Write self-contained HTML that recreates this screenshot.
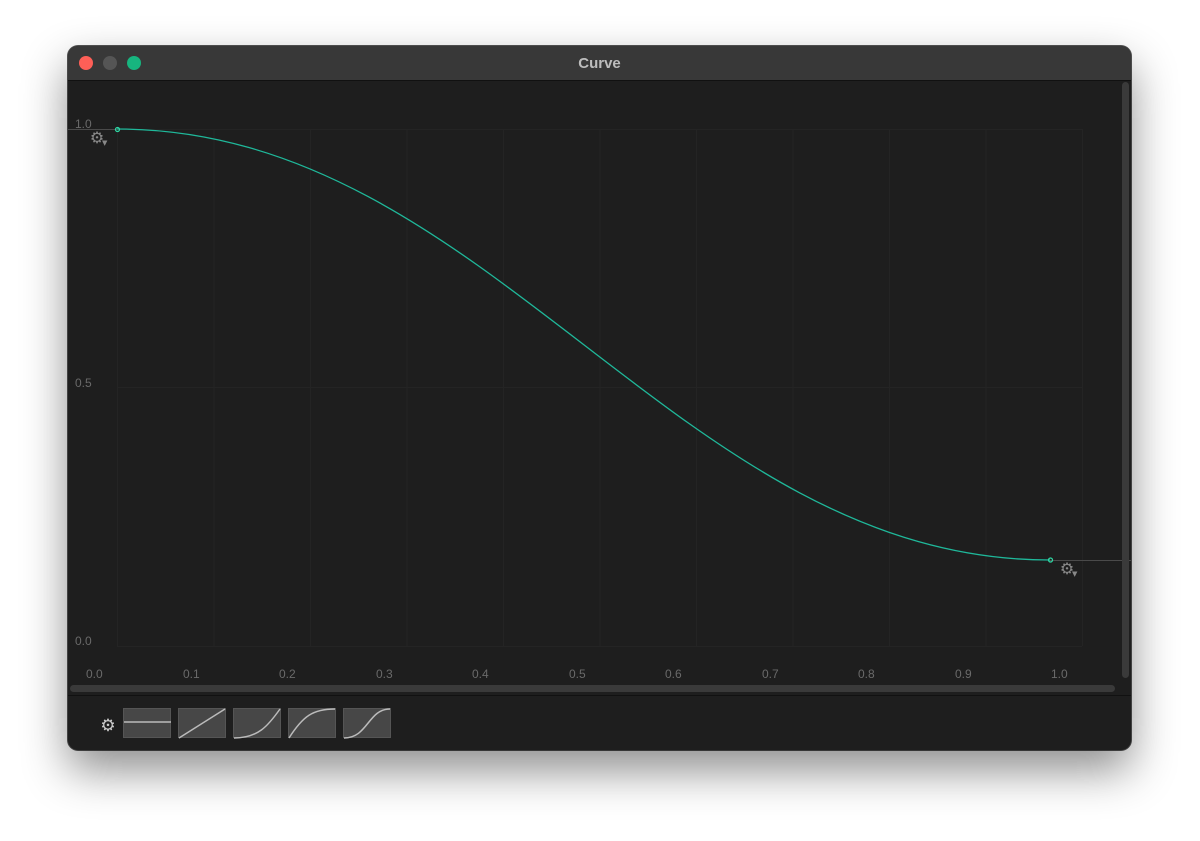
<!DOCTYPE html>
<html><head><style>
body{margin:0;width:1200px;height:841px;background:#fff;overflow:hidden;font-family:"Liberation Sans",sans-serif}
.win{position:absolute;left:68px;top:46px;width:1063px;height:704px;border-radius:10px;background:#1e1e1e;overflow:hidden;box-shadow:0 20px 45px rgba(0,0,0,.45),0 0 0 1px #555}
.tb{position:absolute;left:0;top:0;width:100%;height:34px;background:#383838;border-bottom:1px solid #111}
.tb .t{position:absolute;width:100%;text-align:center;top:9px;color:#bdbdbd;font-weight:bold;font-size:15px}
.d{position:absolute;top:10px;width:14px;height:14px;border-radius:50%}
.lab{position:absolute;color:#6a6a6a;font-size:12px}
.btn{position:absolute;top:662px;width:48px;height:30px;background:#474747;border:1px solid #555;box-sizing:border-box}
</style></head><body>
<div class="win">
<div class="tb"><div class="d" style="left:11px;background:#fe5f57"></div><div class="d" style="left:35px;background:#555"></div><div class="d" style="left:59px;background:#17b57f"></div><div class="t">Curve</div></div>
<svg style="position:absolute;left:0;top:0" width="1063" height="704">
<g stroke="#242424" stroke-width="1">
<line x1="49.5" y1="83" x2="49.5" y2="600"/><line x1="146" y1="83" x2="146" y2="600"/><line x1="242.5" y1="83" x2="242.5" y2="600"/><line x1="339" y1="83" x2="339" y2="600"/><line x1="435.5" y1="83" x2="435.5" y2="600"/><line x1="532" y1="83" x2="532" y2="600"/><line x1="628.5" y1="83" x2="628.5" y2="600"/><line x1="725" y1="83" x2="725" y2="600"/><line x1="821.5" y1="83" x2="821.5" y2="600"/><line x1="918" y1="83" x2="918" y2="600"/><line x1="1014.5" y1="83" x2="1014.5" y2="600"/>
<line x1="49" y1="341.5" x2="1014" y2="341.5"/><line x1="49" y1="600.5" x2="1014" y2="600.5"/><line x1="49" y1="83.5" x2="1014" y2="83.5"/>
</g>
<line x1="0" y1="83.5" x2="49" y2="83.5" stroke="#4a4a4a"/>
<line x1="982" y1="514.5" x2="1063" y2="514.5" stroke="#4a4a4a"/>
<path d="M49 83 C422 83 609 514 982 514" fill="none" stroke="#1fb89a" stroke-width="1.3"/>
<circle cx="49.5" cy="83.5" r="2" fill="none" stroke="#2fd9a5" stroke-width="1.2"/>
<circle cx="982.5" cy="514" r="2" fill="none" stroke="#2fd9a5" stroke-width="1.2"/>
<rect x="1054" y="36" width="7" height="596" rx="3.5" fill="#3a3a3a"/>
<rect x="2" y="639" width="1045" height="7" rx="3.5" fill="#3a3a3a"/>
<line x1="0" y1="649.5" x2="1063" y2="649.5" stroke="#111"/>
</svg>
<div class="btn" style="left:55px"></div><div class="btn" style="left:110px"></div><div class="btn" style="left:165px"></div><div class="btn" style="left:220px"></div><div class="btn" style="left:275px"></div>
<svg style="position:absolute;left:0;top:0;pointer-events:none" width="1063" height="704">
<g fill="none" stroke-width="1.5" stroke="#bbb">
<path d="M56 676 H103"/><path d="M111 692 L157 663"/><path d="M166 692 C190 692 200 680 212 663"/><path d="M221 692 C235 670 245 663 267 663"/><path d="M276 692 C300 692 300 663 322 663"/>
</g>
<text x="40" y="685" fill="#ccc" font-size="17" font-weight="bold" text-anchor="middle" font-family="DejaVu Sans">⚙</text>
<text x="29" y="97" fill="#888" font-size="16" font-weight="bold" text-anchor="middle" font-family="DejaVu Sans">⚙</text><text x="34" y="99" fill="#888" font-size="7" font-family="DejaVu Sans">▼</text>
<text x="999" y="528" fill="#888" font-size="16" font-weight="bold" text-anchor="middle" font-family="DejaVu Sans">⚙</text><text x="1004" y="530" fill="#888" font-size="7" font-family="DejaVu Sans">▼</text>
</svg>
<div class="lab" style="left:7px;top:71px">1.0</div>
<div class="lab" style="left:7px;top:330px">0.5</div>
<div class="lab" style="left:7px;top:588px">0.0</div>
<div class="lab" style="left:18px;top:621px">0.0</div>
<div class="lab" style="left:115px;top:621px">0.1</div>
<div class="lab" style="left:211px;top:621px">0.2</div>
<div class="lab" style="left:308px;top:621px">0.3</div>
<div class="lab" style="left:404px;top:621px">0.4</div>
<div class="lab" style="left:501px;top:621px">0.5</div>
<div class="lab" style="left:597px;top:621px">0.6</div>
<div class="lab" style="left:694px;top:621px">0.7</div>
<div class="lab" style="left:790px;top:621px">0.8</div>
<div class="lab" style="left:887px;top:621px">0.9</div>
<div class="lab" style="left:983px;top:621px">1.0</div>
</div>
</body></html>
